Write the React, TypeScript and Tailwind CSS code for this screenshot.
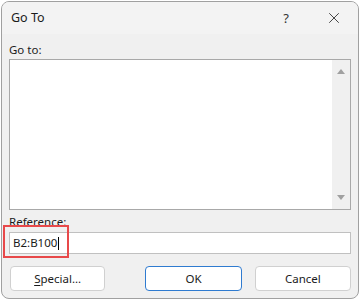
import { X } from 'lucide-react';

export default function App() {
  return (
    <div className="w-[361px] h-[300px] bg-white p-px" style={{ fontFamily: '"Noto Sans", "Open Sans", sans-serif' }}>
      <div className="h-[298px] w-[358px] border border-[#a0a0a0] rounded-lg bg-[#f0f0f0] overflow-hidden flex flex-col text-[#1b1b1b]">
        {/* Title bar */}
        <div className="h-[32px] bg-[#f3f3f3] flex items-center pl-[9px] shrink-0">
          <span className="text-[12.5px] leading-none">Go To</span>
          <span className="ml-auto mr-[36px] text-[13px] leading-none text-[#333]">?</span>
          <X className="w-[18px] h-[18px] mr-[15px] text-[#333]" strokeWidth={1.2} />
        </div>

        {/* Body */}
        <div className="flex flex-col px-[7px] pt-[9px]">
          <label className="text-[11.5px] leading-[14px]">Go to:</label>
          <div className="mt-[2px] h-[151px] border border-[#a8a8a8] bg-white flex">
            <div className="flex-1" />
            <div className="w-[18px] bg-[#f0f0f0] flex flex-col items-center justify-between py-[9px]">
              <div className="w-0 h-0 border-l-[4px] border-r-[4px] border-b-[5px] border-l-transparent border-r-transparent border-b-[#a0a0a0]" />
              <div className="w-0 h-0 border-l-[4px] border-r-[4px] border-t-[5px] border-l-transparent border-r-transparent border-t-[#a0a0a0]" />
            </div>
          </div>

          <label className="mt-[5px] text-[11.5px] leading-[14px]">Reference:</label>
          <div className="relative mt-[3px]">
            <div className="h-[22px] border border-[#c0c0c0] bg-white flex items-center pl-[3px]">
              <span className="text-[11.5px] leading-none">B2:B100</span>
              <span className="w-px h-[13px] bg-black ml-px" />
            </div>
            <div className="absolute left-[-6px] top-[-7px] w-[66px] h-[33px] border-2 border-[#e8494a]" />
          </div>

          <div className="mt-[12px] flex items-center">
            <button className="w-[96px] h-[25px] ml-px rounded-[4px] border border-[#d0d0d0] bg-white text-[11.5px] leading-none">
              <span className="underline underline-offset-2">S</span>pecial...
            </button>
            <button className="w-[97px] h-[25px] ml-[40px] rounded-[4px] border border-[#2f7bd0] bg-white text-[11.5px] leading-none">
              OK
            </button>
            <button className="w-[97px] h-[25px] ml-[13px] rounded-[4px] border border-[#d0d0d0] bg-white text-[11.5px] leading-none">
              Cancel
            </button>
          </div>
        </div>
      </div>
    </div>
  );
}
